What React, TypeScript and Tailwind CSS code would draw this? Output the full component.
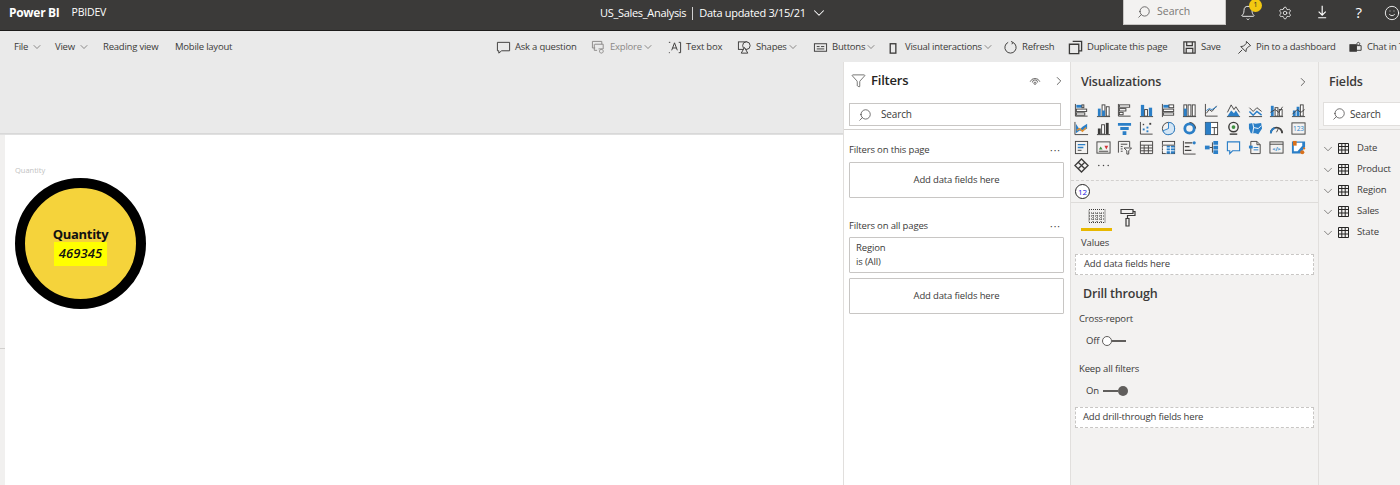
import type { ReactNode } from "react";
import { Bell, ChevronDown, ChevronRight, Filter, Search, Settings, Smile } from "lucide-react";

const FONT = "font-['Open_Sans','Noto_Sans',sans-serif]";
const D = "#444342";
const B = "#2b7fc7";

// small line drawing wrapper for the ribbon icons
function Glyph({ children, size = 15 }: { children: ReactNode; size?: number }) {
  return (
    <svg width={size} height={size} viewBox="0 0 16 16" fill="none" stroke="#3b3a39" strokeWidth="1" className="shrink-0">
      {children}
    </svg>
  );
}

function Lens({ className = "" }: { className?: string }) {
  return <Search size={14} strokeWidth={1.2} className={`-scale-x-100 shrink-0 text-[#3b3a39] ${className}`} />;
}

const Chev = () => <ChevronDown size={12} strokeWidth={1.2} className="shrink-0 text-[#484644]" />;

function Axis() {
  return <path d="M1.5 1v13h13" stroke={D} />;
}

function bars(rects: [number, number, number, number, string][]) {
  return rects.map(([x, y, w, h, c], i) => <rect key={i} x={x} y={y} width={w} height={h} fill={c === "o" ? "#fff" : c} stroke={c === "o" ? D : "none"} strokeWidth="1" />);
}

const VIZ_ICONS: ReactNode[] = [
  <><Axis />{bars([[2.5, 2, 6, 3, B], [8.5, 2, 2, 3, "o"], [2.5, 6.5, 11, 2.5, "o"], [2.5, 10.5, 9, 2.5, "o"]])}</>,
  <><path d="M1 14.5h14" stroke={D} />{bars([[2, 6, 3, 8, B], [6.5, 2, 3, 12, "o"], [11, 4, 3, 10, "o"], [6.5, 8, 3, 6, B]])}</>,
  <><Axis />{bars([[2.5, 2, 11, 2.5, "o"], [2.5, 6, 7, 2.5, "o"], [2.5, 10, 4, 2.5, "o"]])}</>,
  <><path d="M1 14.5h14" stroke={D} />{bars([[2, 2, 3.5, 12, B], [6, 7, 3, 7, "o"], [10.5, 5, 3.5, 9, B]])}</>,
  <><path d="M1.5 1v14" stroke={D} />{bars([[2.5, 2, 6, 3, B], [8.5, 2, 5, 3, "o"], [2.5, 6.5, 11, 2.5, "o"], [2.5, 10.5, 11, 2.5, "o"]])}</>,
  <><path d="M1 14.5h14" stroke={D} />{bars([[2, 2, 3, 12, "o"], [2, 6, 3, 8, B], [6.5, 2, 3, 12, "o"], [11, 2, 3, 12, "o"]])}</>,
  <><Axis /><path d="M2.5 11l3-4 3 2 5-6" stroke={D} /><path d="M2.5 8l3-2 3 1 5-3" stroke={B} /></>,
  <><path d="M1 14.5h14" stroke={D} /><path d="M1.5 14l4-6 3 3 2-3 4 6z" fill={B} stroke="none" /><path d="M1.5 10l4-8 3 5 2-3 4 6" stroke={D} /></>,
  <><path d="M1 14.5h14" stroke={D} /><path d="M1.5 5l4 4 4-4 5 4" stroke={D} /><path d="M1.5 9l4 4 4-4 5 4" stroke={B} strokeWidth="1.6" /></>,
  <><path d="M1 14.5h14" stroke={D} />{bars([[2, 3, 3, 11, B], [6.5, 5, 3, 9, "o"], [11, 7, 3, 7, "o"]])}<path d="M1.5 10l5-3 4 3 4-6" stroke={D} /></>,
  <><path d="M1 14.5h14" stroke={D} />{bars([[2, 8, 3, 6, B], [6, 4, 3, 10, B], [10, 2, 3, 12, "o"]])}<path d="M1.5 12l5-5 4 3 4-3" stroke={D} /></>,

  <><path d="M1 1v13.5h14" stroke={D} /><path d="M2 3l4 6 3-3 5-3v5l-5 3-3-1-4 3z" fill={B} stroke="none" /><path d="M3 10l3-2 3 3 4-4" stroke="#e8912d" strokeWidth="1.4" /></>,
  <><path d="M1 14.5h14" stroke={D} />{bars([[2, 8, 3, 6, "#3b3a39"], [6, 4, 3, 10, "o"], [10.5, 2, 3, 12, "#3b3a39"]])}</>,
  <path d="M1 2h14v3H1zM3.5 6.5h9v3h-9zM6 11h4v4H6z" fill={B} stroke="none" />,
  <><Axis /><g fill={B} stroke="none"><rect x="4" y="8" width="2" height="2" /><rect x="8" y="6" width="2" height="2" /><rect x="8" y="10" width="2" height="2" /></g><g fill={D} stroke="none"><rect x="11" y="2" width="2" height="2" /><rect x="4" y="3" width="1.5" height="1.5" /></g></>,
  <><circle cx="8" cy="8" r="6.5" stroke={D} /><path d="M8 1.5a6.5 6.5 0 1 1-6 9l6-2.5z" fill="#d4e6f5" stroke={B} /></>,
  <><circle cx="8" cy="8" r="5" stroke={B} strokeWidth="3" /><path d="M8 1.5a6.5 6.5 0 0 1 6.5 6.5" stroke={D} /></>,
  <><rect x="1.5" y="1.5" width="13" height="13" stroke={D} fill="#fff" /><path d="M1.5 1.5h6v13h-6z" fill={B} stroke="none" /><path d="M8 7h6.5M11 7v7.5" stroke={D} /></>,
  <><circle cx="8" cy="6.5" r="5" stroke="#3b3a39" strokeWidth="1.5" /><circle cx="8" cy="6.5" r="2" fill="#3f9142" stroke="none" /><path d="M4 14h8" stroke="#3b3a39" strokeWidth="1.5" /></>,
  <><path d="M1 3l4-1 3 1 6-1 1 6-4 6-3-1-5 0-2-5z" fill={B} stroke="none" /><path d="M5 2l1 5 5 1 3-3M6 7l-1 6" stroke="#fff" /></>,
  <><path d="M2 13a6 6 0 0 1 12 0" stroke={D} strokeWidth="2" /><path d="M2 13a6 6 0 0 1 4-5.5" stroke={B} strokeWidth="2" /><path d="M8 12l2-4" stroke={D} /></>,
  <><rect x="1" y="2" width="14" height="12" stroke={D} /><text x="8" y="11" fontSize="7" textAnchor="middle" fill={B} stroke="none" fontFamily="Open Sans">123</text></>,

  <><rect x="1.5" y="1.5" width="13" height="13" stroke={D} /><path d="M4 5h8M4 8h6" stroke={B} strokeWidth="1.4" /><path d="M4 11h4" stroke={D} /></>,
  <><rect x="1" y="2" width="14" height="12" stroke={D} /><path d="M3 10l2-3 2 3z" fill="#3f9142" stroke="none" /><path d="M9 6h4l-2 4z" fill="#d13438" stroke="none" /><path d="M3 12h10" stroke={D} /></>,
  <><path d="M1.5 13.5V1.5h12v6" stroke={D} /><path d="M4 4.5h7M4 7h2M4 9.5h2M4 12h2" stroke={D} /><path d="M7.5 8.5h8l-3 3v3.5h-2v-3.5z" fill="#fff" stroke={D} /></>,
  <path d="M1.5 1.5h13v13h-13zM1.5 5.5h13M1.5 8.5h13M1.5 11.5h13M5.5 5.5v9M10 5.5v9" stroke={D} />,
  <><rect x="1.5" y="1.5" width="13" height="13" stroke={D} /><path d="M5.5 5.5h9v9h-9z" fill={B} stroke="none" /><path d="M1.5 5.5h13M1.5 8.5h13M1.5 11.5h13M5.5 5.5v9M10 5.5v9" stroke="#fff" /><path d="M1.5 5.5h13" stroke={D} /></>,
  <><path d="M1.5 1v14h13" stroke={D} /><path d="M3 3h8M3 7h5M3 11h7" stroke={D} strokeWidth="1.2" /><circle cx="13" cy="3" r="1.7" fill={B} stroke="none" /></>,
  <><rect x="1" y="6" width="5" height="4" fill={B} stroke="none" /><path d="M6 8h3M9 2.5v11" stroke={D} /><path d="M10 1h5v4h-5zM10 6h5v4h-5zM10 11h5v4h-5z" fill={B} stroke="none" /></>,
  <path d="M1.5 2h13v9.5H7L4 14.5v-3H1.5z" stroke={B} strokeWidth="1.2" />,
  <><path d="M3 1.5h6.5l3.5 3.5v9.5H3z" stroke={D} /><path d="M9.5 1.5V5H13" stroke={D} /><rect x="1" y="6" width="4" height="3" fill={B} stroke="none" /><path d="M6 8h5M6 10.5h5" stroke={B} /></>,
  <><rect x="1" y="2" width="14" height="12" stroke={D} /><path d="M1 4.5h14" stroke={D} /><text x="8" y="11.5" fontSize="6" textAnchor="middle" fill={B} stroke="none" fontFamily="Open Sans" fontWeight="700">&lt;/&gt;</text></>,
  <><path d="M1 1.5h14v6l-5 7H1z" fill={B} stroke="none" /><path d="M3 3h9v3l-5 6H3z" fill="#fff" stroke="none" /><rect x="2" y="1" width="4" height="5" fill="#d9711c" stroke="none" /><circle cx="12" cy="13" r="2.2" fill="#d9711c" stroke="none" /><circle cx="14" cy="9" r="1.2" fill="#d9711c" stroke="none" /></>,

  <path d="M8 1l7 7-7 7-7-7zM4.5 4.5l7 7M11.5 4.5l-7 7" stroke="#3b3a39" strokeWidth="1.4" />,
  <g fill={D} stroke="none"><circle cx="3" cy="8" r=".8" /><circle cx="8" cy="8" r=".8" /><circle cx="13" cy="8" r=".8" /></g>,
];

type ToolItem = { label: string; icon?: ReactNode; chevron?: boolean; className: string; muted?: boolean };

// widths are the spacing of the ribbon, so each button starts where the next one's slot ends
const RIGHT_TOOLS: ToolItem[] = [
  { label: "Ask a question", className: "w-[95px]", icon: <path d="M1.5 2.5h13v9H6l-3 2.5v-2.5H1.5z" /> },
  { label: "Explore", chevron: true, muted: true, className: "w-[76px]", icon: <path d="M1.5 1.5h10v3M1.5 1.5v7h3M4 4.5h9v5H8M3.5 4.5v6.5h3M11 10a2 2 0 1 0 .1 0z" stroke="#8a8886" /> },
  { label: "Text box", className: "w-[70px]", icon: <><path d="M2 2.5h1.5M12.5 2.5H14.5v11h-2M3 13.5h-1" /><path d="M5 11l3-8 3 8M6 8.5h4" /></> },
  { label: "Shapes", chevron: true, className: "w-[76px]", icon: <><rect x="1.5" y="2" width="9" height="8" /><circle cx="10" cy="6" r="4" fill="#eaeaea" /><path d="M8 8l3.5 6h-7z" fill="#eaeaea" /></> },
  { label: "Buttons", chevron: true, className: "w-[73px]", icon: <><rect x="1.5" y="4" width="13" height="8" /><path d="M4 7h3M8.5 7H12M4 9.5h8" /></> },
  { label: "Visual interactions", chevron: true, className: "w-[117px]", icon: <rect x="4.5" y="4" width="6" height="10" strokeWidth="1.4" /> },
  { label: "Refresh", className: "w-[65px]", icon: <path d="M10.5 2.5a6 6 0 1 1-5 0M8.5 1.5l2 1-1 2" /> },
  { label: "Duplicate this page", className: "w-[114px]", icon: <path d="M5 1.5h9.5v10h-3M1.5 4.5h10v10h-10z" strokeWidth="1.4" /> },
  { label: "Save", className: "w-[55px]", icon: <path d="M2 2h12v12H2zM5 2v4h6V2M4.5 14V9h7v5" strokeWidth="1.3" /> },
  { label: "Pin to a dashboard", className: "w-[111px]", icon: <path d="M10 1.5l4.5 4.5-1.5.5-3 3-.5 3L4 7l3-.5 3-3zM5.5 10.5L1.5 14.5" /> },
  { label: "Chat in Teams", className: "w-[80px]", icon: <><rect x="2" y="5" width="7" height="7" fill="#3b3a39" /><path d="M9 6h5v5h-5M11 2.5a1.5 1.5 0 1 0 .1 0" /></> },
];

function Toolbar() {
  return (
    <div className={`flex h-[31px] shrink-0 items-center overflow-hidden whitespace-nowrap bg-[#eaeaea] pt-[1px] text-[9.5px] tracking-[-0.22px] text-[#3b3a39] ${FONT}`}>
      <div className="flex w-[496px] shrink-0 items-center pl-[14px]">
        <div className="flex w-[41px] items-center gap-[3px]">
          <span>File</span>
          <Chev />
        </div>
        <div className="flex w-[48px] items-center gap-[3px]">
          <span>View</span>
          <Chev />
        </div>
        <span className="w-[72px]">Reading view</span>
        <span>Mobile layout</span>
      </div>
      {RIGHT_TOOLS.map((tool) => (
        <div key={tool.label} className={`flex shrink-0 items-center gap-[4px] ${tool.className} ${tool.muted ? "text-[#8a8886]" : ""}`}>
          <Glyph>{tool.icon}</Glyph>
          <span>{tool.label}</span>
          {tool.chevron && (
            <span className="-ml-[4px]">
              <Chev />
            </span>
          )}
        </div>
      ))}
    </div>
  );
}

function Header() {
  return (
    <header className={`flex h-[31px] shrink-0 items-start border-b border-[#1d1c1b] bg-[#3b3a39] text-white ${FONT}`}>
      <div className="flex h-[25px] w-[500px] shrink-0 items-center pl-[9px]">
        <span className="text-[12px] font-bold tracking-[-0.3px]">Power BI</span>
        <span className="ml-[12px] text-[10.5px] tracking-[-0.2px]">PBIDEV</span>
      </div>
      <div className="flex h-[26px] w-[623px] shrink-0 items-center pl-[100px] text-[11px] tracking-[-0.3px]">
        <span>US_Sales_Analysis</span>
        <span className="mx-[6px] h-[13px] w-px bg-[#d0d0d0]" />
        <span>Data updated 3/15/21</span>
        <ChevronDown size={18} strokeWidth={1.4} className="ml-[4px]" />
      </div>
      <div className="flex h-[25px] w-[103px] shrink-0 items-center border border-t-0 border-[#c8c6c4] bg-[#f3f2f1] pl-[13px] text-[10.5px] text-[#797775]">
        <Lens />
        <span className="ml-[6px]">Search</span>
      </div>
      <div className="relative ml-[14px] mt-[5px]">
        <Bell size={16} strokeWidth={1.3} />
        <span className="absolute -right-[6px] -top-[6px] flex h-[13px] w-[13px] items-center justify-center rounded-full bg-[#f2c811] text-[7px] text-[#252423]">1</span>
      </div>
      <Settings size={16} strokeWidth={1.3} className="ml-[22px] mt-[5px]" />
      <svg width="14" height="16" viewBox="0 0 14 16" fill="none" stroke="#fff" strokeWidth="1.3" className="ml-[24px] mt-[4px]">
        <path d="M7 1v10M3 7.5l4 4 4-4M2.5 14.5h9" />
      </svg>
      <span className="ml-[27px] mt-[3px] text-[15px] leading-[18px]">?</span>
      <Smile size={16} strokeWidth={1.3} className="ml-[22px] mt-[5px] shrink-0" />
    </header>
  );
}

function Report() {
  return (
    <div className="flex w-[843px] shrink-0 flex-col bg-[#eaeaea]">
      <div className="h-[72px] shrink-0 border-b border-[#d8d8d8]" />
      <div className="flex min-h-0 flex-1 border-t border-[#e0e0e0]">
        <div className="flex w-[5px] shrink-0 flex-col bg-[#f1f0ef]">
          <div className="mt-[213px] h-px bg-[#d2d0ce]" />
        </div>
        <div className={`flex-1 bg-white pl-[10px] pt-[30px] ${FONT}`}>
          <div className="h-[13px] text-[7.5px] leading-[11px] text-[#c2c2c2]">Quantity</div>
          <div className="flex h-[131px] w-[131px] flex-col items-center justify-center rounded-full border-[10px] border-black bg-[#f5d33b] pt-[5px] text-[#111]">
            <span className="text-[13px] font-bold leading-[15px] tracking-[-0.3px]">Quantity</span>
            <span className="flex h-[24px] w-[53px] items-center justify-center bg-[#ffff00] text-[13px] font-semibold italic tracking-[0.1px]">469345</span>
          </div>
        </div>
      </div>
    </div>
  );
}

function DropBox({ children, className }: { children: ReactNode; className: string }) {
  return <div className={`ml-[5px] flex h-[36px] w-[215px] items-center rounded-[1px] border border-[#c8c6c4] bg-white ${className}`}>{children}</div>;
}

function SectionLabel({ children, className }: { children: ReactNode; className: string }) {
  return (
    <div className={`ml-[5px] flex h-[14px] w-[215px] items-center justify-between pr-[3px] ${className}`}>
      <span>{children}</span>
      <span className="text-[10px] leading-[9px] tracking-[1px]">···</span>
    </div>
  );
}

function FiltersPanel() {
  return (
    <aside className={`flex w-[228px] shrink-0 flex-col border-x border-[#e1dfdd] bg-white text-[9.5px] tracking-[-0.15px] text-[#3b3a39] ${FONT}`}>
      <div className="flex h-[41px] shrink-0 items-center pb-[4px] pl-[7px]">
        <Filter size={15} strokeWidth={1.1} />
        <span className="ml-[5px] text-[13px] font-semibold tracking-[-0.2px] text-[#252423]">Filters</span>
        <svg width="12" height="12" viewBox="0 0 16 16" fill="none" stroke="#605e5c" strokeWidth="1.2" className="ml-[121px] mt-[1px]">
          <path d="M1.5 9a7 7 0 0 1 13 0M4.5 10a3.5 3.5 0 0 1 7 0" />
          <circle cx="8" cy="11" r="1.5" />
        </svg>
        <ChevronRight size={14} strokeWidth={1.3} className="ml-[11px]" />
      </div>
      <div className="ml-[5px] flex h-[23px] w-[212px] shrink-0 items-center border border-[#c8c6c4] pl-[8px] text-[10px]">
        <Lens />
        <span className="ml-[9px]">Search</span>
      </div>
      <div className="mt-[3px] h-px shrink-0 bg-[#d2d0ce]" />
      <SectionLabel className="mt-[13px]">Filters on this page</SectionLabel>
      <DropBox className="mt-[5px] justify-center">Add data fields here</DropBox>
      <SectionLabel className="mt-[21px]">Filters on all pages</SectionLabel>
      <DropBox className="mt-[4px] flex-col !items-start justify-center pl-[6px] leading-[14px]">
        <span>Region</span>
        <span>is (All)</span>
      </DropBox>
      <DropBox className="mt-[5px] justify-center">Add data fields here</DropBox>
    </aside>
  );
}

function VisualizationsPanel() {
  return (
    <aside className={`flex w-[248px] shrink-0 flex-col border-r border-[#e1dfdd] bg-[#f3f2f1] text-[9.5px] tracking-[-0.15px] text-[#3b3a39] ${FONT}`}>
      <div className="flex h-[39px] shrink-0 items-center justify-between pl-[10px] pr-[8px] pt-[1px]">
        <span className="text-[12.5px] font-semibold tracking-[-0.2px]">Visualizations</span>
        <ChevronRight size={14} strokeWidth={1.3} />
      </div>
      <div className="ml-[3px] grid shrink-0 grid-cols-[repeat(11,21.7px)] auto-rows-[18.5px] items-center">
        {VIZ_ICONS.map((icon, i) => (
          <Glyph key={i} size={15}>{icon}</Glyph>
        ))}
      </div>
      <div className="mt-[5px] shrink-0 border-t border-dashed border-[#d2d0ce]" />
      <div className="flex h-[21px] shrink-0 items-center pl-[4px]">
        <span className="flex h-[15px] w-[15px] items-center justify-center rounded-full border border-[#252423] bg-white text-[8px] tracking-normal text-[#2020e0]">12</span>
      </div>
      <div className="h-px shrink-0 bg-[#dedcda]" />
      <div className="flex h-[28px] shrink-0">
        <div className="ml-[10px] flex w-[31px] flex-col items-center border-b-[3px] border-[#e8b800] pt-[5px]">
          <svg width="18" height="16" viewBox="0 0 18 16" fill="none" stroke="#3b3a39" strokeWidth="1" strokeDasharray="1 1">
            <path d="M1 1.5h16v13H1zM1 5h16M1 8h16M1 11h16M5 5v9M9 5v9M13 5v9" />
          </svg>
        </div>
        <svg width="16" height="19" viewBox="0 0 16 19" fill="none" stroke="#3b3a39" strokeWidth="1.2" className="ml-[8px] mt-[5px]">
          <path d="M1 1.5h12v4H1zM13 3.5h2v4H7.5v3M6 10.5h3V18H6z" />
        </svg>
      </div>
      <div className="ml-[10px] mt-[5px] h-[14px] leading-[14px]">Values</div>
      <div className="ml-[4px] mt-[4px] flex h-[21px] w-[239px] shrink-0 items-center border border-dashed border-[#c8c6c4] bg-white pl-[8px]">Add data fields here</div>
      <div className="ml-[12px] mt-[10px] h-[18px] text-[12.5px] font-semibold leading-[18px] tracking-[-0.2px]">Drill through</div>
      <div className="ml-[8px] mt-[9px] h-[14px] leading-[14px]">Cross-report</div>
      <div className="ml-[15px] mt-[8px] flex h-[14px] items-center">
        <span>Off</span>
        <span className="ml-[3px] h-[10px] w-[10px] rounded-full border-[1.5px] border-[#605e5c] bg-white" />
        <span className="h-[1.5px] w-[14px] bg-[#605e5c]" />
      </div>
      <div className="ml-[8px] mt-[14px] h-[14px] leading-[14px]">Keep all filters</div>
      <div className="ml-[15px] mt-[8px] flex h-[14px] items-center">
        <span>On</span>
        <span className="ml-[4px] h-[1.5px] w-[15px] bg-[#605e5c]" />
        <span className="h-[10px] w-[10px] rounded-full bg-[#605e5c]" />
      </div>
      <div className="ml-[4px] mt-[9px] flex h-[21px] w-[239px] shrink-0 items-center border border-dashed border-[#c8c6c4] bg-white pl-[7px]">Add drill-through fields here</div>
    </aside>
  );
}

const FIELD_NAMES = ["Date", "Product", "Region", "Sales", "State"];

function FieldsPanel() {
  return (
    <aside className={`min-w-0 flex-1 overflow-hidden bg-[#f3f2f1] text-[9.5px] tracking-[-0.15px] text-[#3b3a39] ${FONT}`}>
      <div className="flex h-[40px] items-center pl-[10px] pt-[1px] text-[12.5px] font-semibold">Fields</div>
      <div className="ml-[4px] flex h-[24px] w-[90px] items-center border border-[#e1dfdd] bg-white pl-[8px] text-[10px]">
        <Lens />
        <span className="ml-[4px]">Search</span>
      </div>
      <div className="mt-[3px] h-px bg-[#dedcda]" />
      <ul className="pt-[8px]">
        {FIELD_NAMES.map((name) => (
          <li key={name} className="flex h-[21px] items-center pl-[2px]">
            <ChevronDown size={14} strokeWidth={1.1} className="text-[#484644]" />
            <svg width="11" height="11" viewBox="0 0 11 11" fill="none" stroke="#252423" strokeWidth="1" className="ml-[3px]">
              <path d="M.5.5h10v10H.5zM.5 3.5h10M.5 7h10M3.8 .5v10M7.2 .5v10" />
            </svg>
            <span className="ml-[8px]">{name}</span>
          </li>
        ))}
      </ul>
    </aside>
  );
}

export default function App() {
  return (
    <div className="flex h-[485px] w-[1400px] flex-col overflow-hidden bg-[#eaeaea]">
      <Header />
      <Toolbar />
      <div className="flex min-h-0 flex-1">
        <Report />
        <FiltersPanel />
        <VisualizationsPanel />
        <FieldsPanel />
      </div>
    </div>
  );
}
